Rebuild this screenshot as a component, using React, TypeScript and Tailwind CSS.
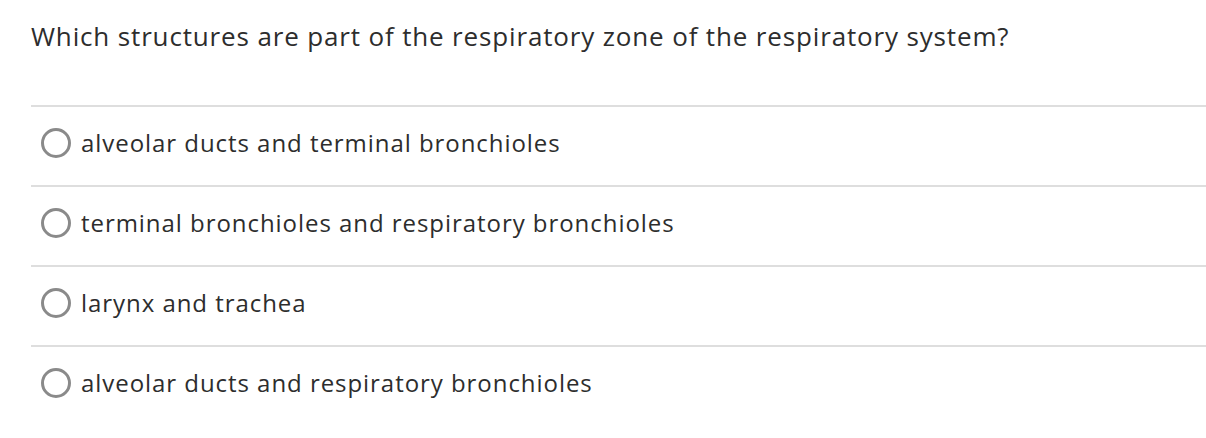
const options = [
  'alveolar ducts and terminal bronchioles',
  'terminal bronchioles and respiratory bronchioles',
  'larynx and trachea',
  'alveolar ducts and respiratory bronchioles',
];

export default function App() {
  return (
    <div className="w-[1206px] h-[438px] bg-white pl-[31px] text-[#2d2d2d]" style={{ fontFamily: '"Open Sans", "Liberation Sans", sans-serif' }}>
      <h1 className="pt-[18px] h-[105px] text-[26px] leading-[36px] tracking-[0.85px] font-normal">
        Which structures are part of the respiratory zone of the respiratory system?
      </h1>
      <div>
        {options.map((opt) => (
          <label key={opt} className="flex items-center gap-[10px] h-[80px] border-t-2 border-[#dedede] pl-[10px] pb-[6px] cursor-pointer">
            <span className="w-[30px] h-[30px] rounded-full border-[3px] border-[#8a8a8a] shrink-0" />
            <span className="text-[24px] leading-[30px] tracking-[0.95px]">{opt}</span>
          </label>
        ))}
      </div>
    </div>
  );
}
